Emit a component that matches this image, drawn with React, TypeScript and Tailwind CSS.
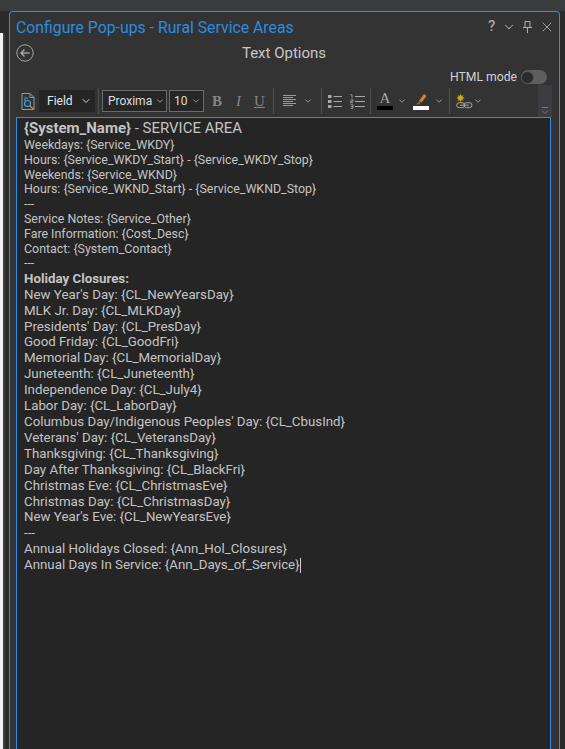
import React from 'react';
import { ChevronDown, X } from 'lucide-react';

const topLines = [
  'Weekdays: {Service_WKDY}',
  'Hours: {Service_WKDY_Start} - {Service_WKDY_Stop}',
  'Weekends: {Service_WKND}',
  'Hours: {Service_WKND_Start} - {Service_WKND_Stop}',
  '---',
  'Service Notes: {Service_Other}',
  'Fare Information: {Cost_Desc}',
  'Contact: {System_Contact}',
  '---',
];

const holidayLines = [
  "New Year's Day: {CL_NewYearsDay}",
  'MLK Jr. Day: {CL_MLKDay}',
  "Presidents' Day: {CL_PresDay}",
  'Good Friday: {CL_GoodFri}',
  'Memorial Day: {CL_MemorialDay}',
  'Juneteenth: {CL_Juneteenth}',
  'Independence Day: {CL_July4}',
  'Labor Day: {CL_LaborDay}',
  "Columbus Day/Indigenous Peoples' Day: {CL_CbusInd}",
  "Veterans' Day: {CL_VeteransDay}",
  'Thanksgiving: {CL_Thanksgiving}',
  'Day After Thanksgiving: {CL_BlackFri}',
  'Christmas Eve: {CL_ChristmasEve}',
  'Christmas Day: {CL_ChristmasDay}',
  "New Year's Eve: {CL_NewYearsEve}",
  '---',
  'Annual Holidays Closed: {Ann_Hol_Closures}',
];

function Divider() {
  return <div className="w-px h-[26px] bg-[#4f4f4f] shrink-0" />;
}

function Caret({ className = '' }: { className?: string }) {
  return <ChevronDown className={`w-[10px] h-[10px] text-[#a8a8a8] shrink-0 ${className}`} strokeWidth={2} />;
}

function ToolIcons() {
  return (
    <div className="flex items-center h-[31px] shrink-0 pb-[1px] pl-[4px]">
      <svg width="14" height="17" viewBox="0 0 14 17" fill="none" className="mr-[4px] ml-[1px] shrink-0">
        <path d="M1 .5h8l4 4v12H1z" stroke="#8b9aa5" fill="#333" />
        <path d="M9 .5v4h4" stroke="#8b9aa5" />
        <path d="M3 5h4M3 7h2" stroke="#4aa3d8" />
        <circle cx="6.500" cy="10.500" r="3" stroke="#4aa3d8" strokeWidth="1.2" />
        <path d="M9 13l3.500 3" stroke="#c8823c" strokeWidth="1.600" />
      </svg>
      <div className="w-[56px] h-[22px] bg-[#252525] flex items-center pl-[8px] shrink-0">
        <span className="text-[12px] text-[#e6e6e6] leading-none w-[33px]">Field</span>
        <ChevronDown className="w-[12px] h-[12px] text-[#cfcfcf]" strokeWidth={2} />
      </div>
      <div className="w-px h-[26px] bg-[#4f4f4f] mx-[3px] shrink-0" />
      <div className="w-[65px] h-[22px] bg-[#262626] border border-[#6a6a6a] flex items-center pl-[5px] shrink-0">
        <span className="text-[12px] text-[#dedede] leading-none w-[47px]">Proxima</span>
        <Caret />
      </div>
      <div className="w-[35px] h-[22px] ml-[2px] bg-[#262626] border border-[#6a6a6a] flex items-center pl-[4px] shrink-0">
        <span className="text-[12px] text-[#dedede] leading-none w-[17px]">10</span>
        <Caret />
      </div>
      <div className="flex items-center text-[#858585] font-['Liberation_Serif',serif] text-[15px] ml-[8px] shrink-0">
        <span className="w-[24px] font-bold">B</span>
        <span className="w-[18px] italic">I</span>
        <span className="underline">U</span>
      </div>
      <div className="w-px h-[26px] bg-[#4f4f4f] ml-[8px] mr-[9px] shrink-0" />
      <svg width="13" height="12" viewBox="0 0 13 12" stroke="#9a9a9a" className="shrink-0">
        <path d="M0 .5h13M0 2.500h10M0 4.500h13M0 6.500h10M0 8.500h13M0 10.500h10" />
      </svg>
      <Caret className="ml-[7px] mr-[8px]" />
      <Divider />
      <svg width="14" height="13" viewBox="0 0 14 13" className="ml-[6px] shrink-0" stroke="#a8a8a8">
        <path d="M0 0h3.500v3H0zM0 5h3.500v3H0zM0 10h3.500v3H0z" fill="#a8a8a8" stroke="none" />
        <path d="M5.500 1.500h8.500M5.500 6.500h8.500M5.500 11.500h8.500" />
      </svg>
      <svg width="15" height="15" viewBox="0 0 15 15" className="ml-[8px] mr-[5px] shrink-0" stroke="#a8a8a8">
        <path d="M5 2.500h10M5 7.500h10M5 12.500h10" />
        <path d="M.5 .7h1.500v3.600M.5 5.800h2.500v1.500h-2.500v1.500h2.500M.5 10.700h2.500v3.600h-2.500M1 12.500h2" fill="none" strokeWidth=".8" />
      </svg>
      <Divider />
      <div className="flex flex-col items-center ml-[6px] w-[16px] shrink-0">
        <span className="font-['Liberation_Serif',serif] text-[15px] leading-[13px] text-[#a8a8a8]">A</span>
        <div className="w-[16px] h-[4px] bg-black mt-[1px]" />
      </div>
      <Caret className="ml-[4px]" />
      <div className="flex flex-col items-center ml-[6px] w-[16px] shrink-0">
        <svg width="12" height="12" viewBox="0 0 12 12" className="block">
          <path d="M4 8l5-7 2.500 2-5 6.500z" fill="#d9822b" />
          <path d="M1 11.500l3-3 1.500 1.500-1.500 1.500z" fill="#8a6a4a" />
        </svg>
        <div className="w-[16px] h-[4px] bg-white mt-[1px]" />
      </div>
      <Caret className="ml-[5px] mr-[5px]" />
      <Divider />
      <svg width="17" height="15" viewBox="0 0 17 15" fill="none" className="ml-[6px] shrink-0">
        <path d="M4.500 0l1 2 2-1-1 2 2 1-2 1 1 2-2-1-1 2-1-2-2 1 1-2-2-1 2-1-1-2 2 1z" fill="#c9a81f" />
        <rect x=".7" y="8.700" width="8" height="5" rx="2.500" stroke="#a8a8a8" />
        <rect x="8" y="8.700" width="8" height="5" rx="2.500" stroke="#a8a8a8" />
        <path d="M4 11.200h9" stroke="#a8a8a8" />
      </svg>
      <Caret />
      <div className="ml-auto w-[14px] h-[32px] self-start mt-[-1px] bg-[#3c3d40] flex items-end justify-center pb-[2px]">
        <svg width="8" height="8" viewBox="0 0 8 8" stroke="#777" fill="none">
          <path d="M1 .5h6M1 3.500l3 3 3-3" />
        </svg>
      </div>
    </div>
  );
}

export default function App() {
  return (
    <div className="w-[565px] h-[749px] overflow-hidden bg-[#2a2a2a] flex flex-col font-['Roboto',sans-serif]">
      <div className="h-[11px] shrink-0 bg-[#3a3b3d]" />
      <div className="flex flex-1 min-h-0">
        <div className="w-[9px] shrink-0 flex flex-col">
          <div className="h-[22px] shrink-0" />
          <div className="flex-1 flex">
            <div className="w-[3px] bg-[#f0f0f0]" />
            <div className="w-[2px] bg-[#3c3c3c]" />
          </div>
        </div>
        <div className="w-[551px] shrink-0 border border-[#2a8fe6] border-b-0 rounded-t-[4px] bg-[#333333] flex flex-col pl-[6px] pr-[7px] mb-[-4px]">
          <div className="flex items-center justify-between h-[29px] shrink-0">
            <span className="text-[15.800px] leading-none text-[#2b8de0] whitespace-nowrap pt-[3px]">Configure Pop-ups - Rural Service Areas</span>
            <div className="flex items-center text-[#a8a8a8] mr-[-3px]">
              <span className="text-[15px] leading-none font-medium w-[14px]">?</span>
              <ChevronDown className="w-[14px] h-[14px] mr-[7px]" strokeWidth={1.8} />
              <svg width="9" height="12" viewBox="0 0 9 12" fill="none" stroke="#b0b0b0" className="mr-[7px]">
                <path d="M2 .5h5v6h-5zM0 6.500h9M4.500 7v5" />
              </svg>
              <X className="w-[16px] h-[16px]" strokeWidth={1.4} />
            </div>
          </div>
          <div className="relative h-[24px] shrink-0 flex items-center justify-center">
            <svg width="18" height="18" viewBox="0 0 18 18" fill="none" stroke="#a3a3a3" className="absolute left-0 top-[3px]">
              <circle cx="9" cy="9" r="8.200" strokeWidth="1" />
              <path d="M13.500 9h-8M8.500 5.500l-3.500 3.500 3.500 3.500" strokeWidth="1.500" />
            </svg>
            <span className="text-[15px] text-[#c8c8c8] leading-none">Text Options</span>
          </div>
          <div className="h-[18px] shrink-0 mt-[3px] flex items-center justify-end gap-[4px] pr-[5px]">
            <span className="text-[12.200px] leading-none text-[#d2d2d2]">HTML mode</span>
            <div className="w-[26px] h-[14px] rounded-full bg-[#5e5e5e] flex items-center">
              <div className="w-[13px] h-[13px] rounded-full bg-[#2b2b2b] border border-[#555]" />
            </div>
          </div>
          <ToolIcons />
          <div className="flex-1 min-h-0 border border-[#2a8fe6] bg-[#252525] pl-[7px] pt-[2px] mr-[1px] text-[#c4c4c4] text-[13.300px]">
            <div className="text-[15px] leading-[16px] whitespace-nowrap mb-[2px]">
              <span className="font-bold">{'{System_Name}'}</span> - SERVICE AREA
            </div>
            {topLines.map((line, i) => (
              <div key={i} className="text-[12.400px] leading-[14.800px] whitespace-nowrap">{line}</div>
            ))}
            <div className="leading-[15.600px] whitespace-nowrap font-bold">Holiday Closures:</div>
            {holidayLines.map((line, i) => (
              <div key={i} className="leading-[15.900px] whitespace-nowrap">{line}</div>
            ))}
            <div className="leading-[15.900px] whitespace-nowrap flex items-center">
              <span className="whitespace-pre">Annual Days In Service: {'{Ann_Days_of_Service}'}</span>
              <span className="inline-block w-px h-[15px] bg-[#d0d0d0]" />
            </div>
          </div>
        </div>
      </div>
    </div>
  );
}
